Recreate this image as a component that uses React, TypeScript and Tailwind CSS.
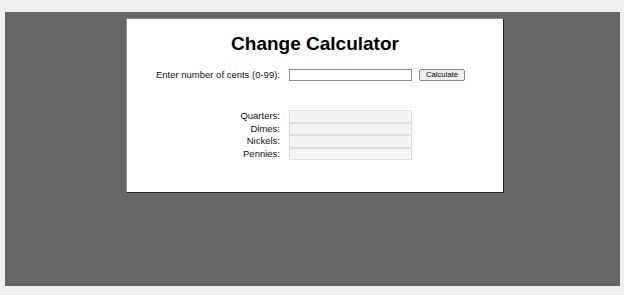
import { useState } from "react";

const coins = [
  { name: "Quarters", value: 25 },
  { name: "Dimes", value: 10 },
  { name: "Nickels", value: 5 },
  { name: "Pennies", value: 1 },
];

export default function App() {
  const [cents, setCents] = useState("");
  const [result, setResult] = useState<Record<string, string>>({});

  const handleCalculate = () => {
    let left = parseInt(cents, 10);
    if (isNaN(left) || left < 0 || left > 99) return;
    const out: Record<string, string> = {};
    coins.forEach((c) => {
      out[c.name] = String(Math.floor(left / c.value));
      left = left % c.value;
    });
    setResult(out);
  };

  return (
    <div className="min-h-[295px] bg-[#f0f0f0] pt-[12px] font-['Liberation_Sans',Arial,sans-serif]">
      <div className="ml-[5px] h-[274px] w-[615px] bg-[#666666] pt-[6px]">
        <div className="ml-[121px] w-[378px] border border-t-[#8a8a8a] border-l-[#8a8a8a] border-r-[#222] border-b-[#222] bg-white pt-[14px] pb-[32px]">
          <h1 className="text-center text-[19px] leading-[22px] font-bold text-black">
            Change Calculator
          </h1>

          <div className="mt-[14px] grid grid-cols-[153px_123px_auto] gap-x-[9px] text-[9.5px] text-[#111]">
            <label className="h-[12px] text-right leading-[11px]">
              Enter number of cents (0-99):
            </label>
            <input
              type="text"
              value={cents}
              onChange={(e) => setCents(e.target.value)}
              className="h-[12px] w-[123px] border border-[#8f8f8f] bg-white px-1 text-[9px] outline-none"
            />
            <button
              onClick={handleCalculate}
              className="ml-[-2px] h-[12px] w-[46px] rounded-[2px] border border-[#8a8a8a] bg-[#efefef] text-[7.7px] leading-[10px] text-black"
            >
              Calculate
            </button>
          </div>

          <div className="mt-[29px] grid grid-cols-[153px_123px] gap-x-[9px] text-[9.5px] text-[#111]">
            {coins.map((c) => (
              <div key={c.name} className="contents">
                <label className="h-[12.5px] text-right leading-[12px]">
                  {c.name}:
                </label>
                <input
                  type="text"
                  readOnly
                  value={result[c.name] ?? ""}
                  className="h-[12.5px] w-[123px] border border-[#dedede] bg-[#f5f5f5] px-1 text-[9px] outline-none"
                />
              </div>
            ))}
          </div>
        </div>
      </div>
    </div>
  );
}
